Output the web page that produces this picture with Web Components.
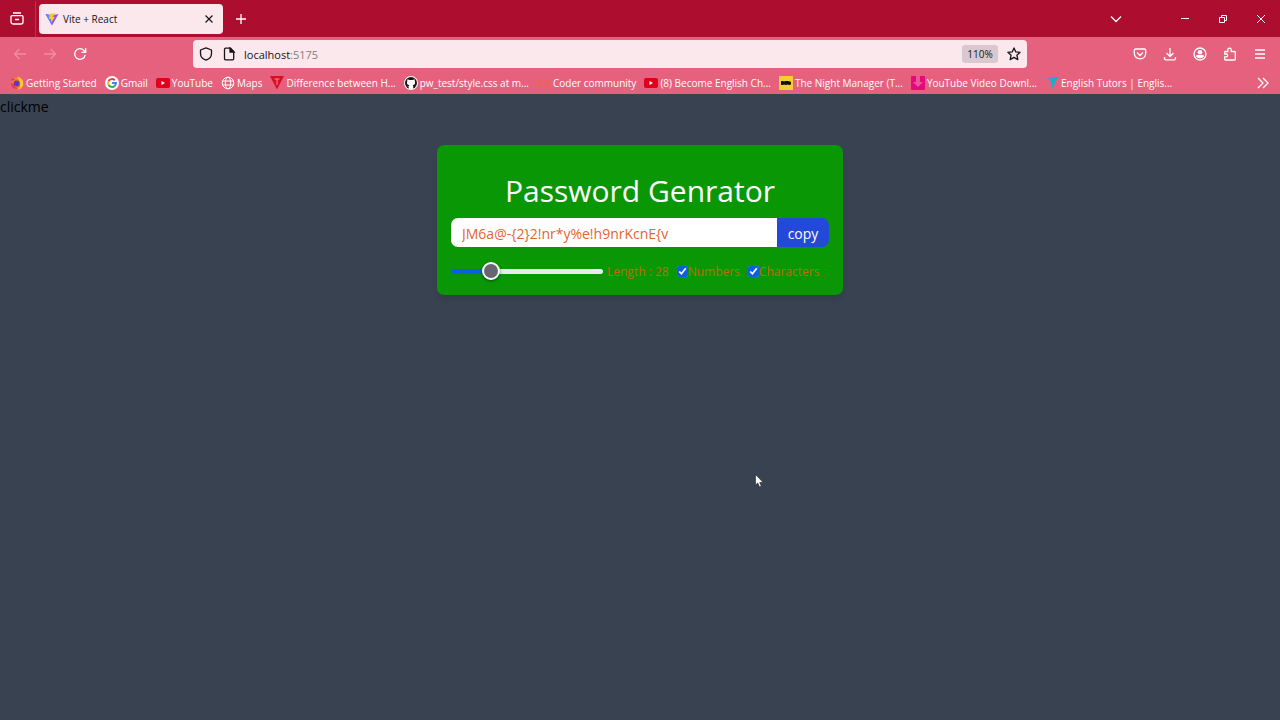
<!DOCTYPE html>
<html lang="en">
<head>
<meta charset="UTF-8">
<meta name="viewport" content="width=device-width, initial-scale=1.0">
<title>Vite + React</title>
<style>
    body {
        margin: 0;
        min-height: 100vh;
        background: #384250;
        font-family: "Open Sans", "Noto Sans", sans-serif;
        color: #000;
    }
</style>
</head>
<body>
<browser-window>
    <tab-strip slot="tabs"></tab-strip>
    <nav-bar slot="nav"></nav-bar>
    <bookmarks-bar slot="bookmarks">
        <bookmark-link>
            <svg slot="icon" viewBox="0 0 14 14"><circle cx="7" cy="7.500" r="6" fill="#ff7a1c"/><path d="M7 1c4 0 6.500 3 6.300 7-.3 3-2.800 5.500-6 5.500 4-2 4-7-.3-12.500z" fill="#ffcb35"/><path d="M1 4.500 2.500 2l1.200 1.600L6 4z" fill="#e8304e"/><circle cx="6.700" cy="7.500" r="3" fill="#6b35b5"/><path d="M1 7c0 5 4 7 8 5-3 0-5-1.500-5.500-4z" fill="#ee3558"/></svg>
            Getting Started
        </bookmark-link>
        <bookmark-link>
            <svg slot="icon" viewBox="0 0 14 14"><circle cx="7" cy="7" r="7" fill="#fff"/><g fill="none" stroke-width="2"><path d="M3.500 5.200A4 4 0 0 1 9.800 4.200" stroke="#ea4335"/><path d="M3.500 5.200a4 4 0 0 0 0 3.600" stroke="#fbbc05"/><path d="M3.500 8.800a4 4 0 0 0 6 1.300" stroke="#34a853"/><path d="M9.500 10.100A4 4 0 0 0 11 7H7" stroke="#4285f4"/></g></svg>
            Gmail
        </bookmark-link>
        <bookmark-link>
            <svg slot="icon" viewBox="0 0 14 14"><rect y="2" width="14" height="10" rx="2" fill="#e0001b"/><path d="M5.500 5v4L9 7z" fill="#fff"/></svg>
            YouTube
        </bookmark-link>
        <bookmark-link>
            <svg slot="icon" viewBox="0 0 14 14" fill="none" stroke="#fff"><circle cx="7" cy="7" r="5.800"/><ellipse cx="7" cy="7" rx="2.700" ry="5.800"/><path d="M1.500 5h11M1.500 9h11"/></svg>
            Maps
        </bookmark-link>
        <bookmark-link>
            <svg slot="icon" viewBox="0 0 14 14"><path d="M0 0h14L7 13.500z" fill="#d80d26"/><path d="M4.500 3h5M7 3v6" stroke="#f8889a" fill="none"/></svg>
            Difference between H...
        </bookmark-link>
        <bookmark-link>
            <svg slot="icon" viewBox="0 0 14 14"><circle cx="7" cy="7" r="7" fill="#fff"/><circle cx="7" cy="7" r="6" fill="#181717"/><path d="M3.500 3.200 5.300 4h3.400l1.800-.8.400 2.300c.6 2-.2 3.500-2.200 3.800.4.500.5 1 .5 1.500V13H4.900v-1.500l-1.700-1.200 1.700.3.500-1.300C3.200 9 2.500 7.500 3.100 5.500z" fill="#fff"/></svg>
            pw_test/style.css at m...
        </bookmark-link>
        <bookmark-link>
            <svg slot="icon" viewBox="0 0 14 14" fill="none" stroke="#e8654f" stroke-width="2"><path d="M5 4H2v6h3M12 4H9v6h3"/></svg>
            Coder community
        </bookmark-link>
        <bookmark-link>
            <svg slot="icon" viewBox="0 0 14 14"><rect y="2" width="14" height="10" rx="2" fill="#e0001b"/><path d="M5.500 5v4L9 7z" fill="#fff"/></svg>
            (8) Become English Ch...
        </bookmark-link>
        <bookmark-link>
            <svg slot="icon" viewBox="0 0 14 14"><path d="M0 0h14v14H0z" fill="#f5cf32"/><path d="M2 5h2l1 .5L6 5h3l2 .5 1 .5v2.500l-2 .5-1-.5-2 .5-2-.5-1 .5H2z" fill="#111"/></svg>
            The Night Manager (T...
        </bookmark-link>
        <bookmark-link>
            <svg slot="icon" viewBox="0 0 14 14"><rect width="14" height="14" rx="1" fill="#e20a7c"/><path d="M5 0h4v6h3l-5 5-5-5h3z" fill="#ef5596"/></svg>
            YouTube Video Downl...
        </bookmark-link>
        <bookmark-link>
            <svg slot="icon" viewBox="0 0 14 14"><path d="M1 1h12L7 13.500 6 6z" fill="#13b1cb"/><path d="M1 1h5v5z" fill="#6c8fb4"/></svg>
            English Tutors | Englis...
        </bookmark-link>
    </bookmarks-bar>
    <password-generator></password-generator>
</browser-window>
<mouse-pointer></mouse-pointer>

<script>
class BrowserWindow extends HTMLElement {

    constructor() {
        super();
        this.shadowDOM = this.attachShadow({mode: "open"});
    }

    connectedCallback() {
        this.shadowDOM.innerHTML = `
        <style>
        :host {
            display: block;
        }

        main {
            font-size: 14px;
            line-height: 26px;
        }
        </style>
        <header>
            <slot name="tabs"></slot>
            <slot name="nav"></slot>
            <slot name="bookmarks"></slot>
        </header>
        <main>
            <div>clickme</div>
            <slot></slot>
        </main>`;
    }
}

customElements.define("browser-window", BrowserWindow);

class TabStrip extends HTMLElement {

    constructor() {
        super();
        this.shadowDOM = this.attachShadow({mode: "open"});
    }

    connectedCallback() {
        this.shadowDOM.innerHTML = `
        <style>
        :host {
            display: flex;
            align-items: center;
            height: 37px;
            background: #ad0d2e;
            color: #fff;
        }

        button {
            display: flex;
            align-items: center;
            justify-content: center;
            width: 36px;
            height: 36px;
            padding: 0;
            border: none;
            background: none;
            color: inherit;
        }

        svg {
            width: 16px;
            height: 16px;
            fill: none;
            stroke: currentColor;
        }

        .view {
            padding-right: 2px;
            border-right: 1px solid #bd3452;
        }

        .tab {
            display: flex;
            align-items: center;
            gap: 4px;
            box-sizing: border-box;
            width: 184px;
            height: 30px;
            margin-left: 3px;
            padding-left: 6px;
            border-radius: 4px;
            background: #fae8ec;
            color: #15141a;
            font-size: 10px;
        }

        .tab span {
            flex: 1;
        }

        .tab button {
            width: 28px;
            height: 28px;
        }

        .tab svg {
            width: 14px;
            height: 14px;
        }

        .list {
            margin-left: auto;
            margin-right: 33px;
        }

        .window {
            display: flex;
            gap: 2px;
            margin-right: 1px;
        }
        </style>
        <button class="view" aria-label="View"><svg viewBox="0 0 16 16"><path d="M4 2h8M3 4.700h10a1 1 0 0 1 1 1V11a2 2 0 0 1-2 2H4a2 2 0 0 1-2-2V5.700a1 1 0 0 1 1-1zM6 8.500h4" stroke-width="1.300"/></svg></button>
        <div class="tab">
            <svg viewBox="0 0 14 14"><path d="M.5 2 7 13.500 13.500 2 7 3.200z" fill="#9250f0" stroke="none"/><path d="M.5 2 7 13.500 5 3z" fill="#548bfa" stroke="none"/><path d="M10 1 4.500 2l-.3 5h1.600l.7 3.500L9.800 5H8z" fill="#ffc920" stroke="none"/></svg>
            <span>Vite + React</span>
            <button aria-label="Close tab"><svg viewBox="0 0 14 14"><path d="m3.500 3.500 7 7m0-7-7 7" stroke-width="1.200"/></svg></button>
        </div>
        <button aria-label="New tab"><svg viewBox="0 0 16 16"><path d="M8 3v10M3 8h10" stroke-width="1.300"/></svg></button>
        <button class="list" aria-label="List all tabs"><svg viewBox="0 0 16 16"><path d="m3 5.500 5 5 5-5" stroke-width="1.300"/></svg></button>
        <div class="window">
            <button aria-label="Minimize"><svg viewBox="0 0 16 16"><path d="M4 7.500h8"/></svg></button>
            <button aria-label="Restore"><svg viewBox="0 0 16 16"><path d="M4.500 6.500h5v5h-5zM6.500 6.500v-2h5v5h-2"/></svg></button>
            <button aria-label="Close"><svg viewBox="0 0 16 16"><path d="m4 4 8 8m0-8-8 8"/></svg></button>
        </div>`;
    }
}

customElements.define("tab-strip", TabStrip);

class NavBar extends HTMLElement {

    constructor() {
        super();
        this.shadowDOM = this.attachShadow({mode: "open"});
    }

    connectedCallback() {
        this.shadowDOM.innerHTML = `
        <style>
        :host {
            display: grid;
            grid-template-columns: 183fr 834fr 243fr;
            align-items: center;
            height: 34px;
            padding: 0 10px;
            background: #e6617d;
            color: #fff;
        }

        .buttons, .tools, .url {
            display: flex;
            align-items: center;
        }

        button {
            display: flex;
            align-items: center;
            justify-content: center;
            width: 30px;
            height: 30px;
            padding: 0;
            border: none;
            background: none;
            color: inherit;
        }

        button:disabled {
            color: #ee8ea3;
        }

        svg {
            width: 14px;
            height: 14px;
            fill: none;
            stroke: currentColor;
            stroke-width: 1.300;
        }

        .buttons button {
            width: 20px;
        }

        .buttons {
            gap: 10px;
        }

        .url {
            height: 28px;
            box-sizing: border-box;
            padding: 0 5px;
            border-radius: 4px;
            background: #fae8ec;
            color: #15141a;
            font-size: 11px;
        }

        .url button {
            width: 16px;
        }

        .url a {
            flex: 1;
            margin-left: 7px;
            color: inherit;
            text-decoration: none;
        }

        .url a span {
            color: #857a82;
        }

        .url .info {
            margin-left: 7px;
        }

        .url .zoom {
            width: 36px;
            height: 18px;
            margin-right: 8px;
            border-radius: 3px;
            background: #d9c9ce;
            font: inherit;
            font-size: 10px;
        }

        .tools {
            justify-content: flex-end;
            margin-right: -5px;
        }
        </style>
        <div class="buttons">
            <button disabled aria-label="Back"><svg viewBox="0 0 14 14"><path d="M13 7H1.500m5-5-5 5 5 5"/></svg></button>
            <button disabled aria-label="Forward"><svg viewBox="0 0 14 14"><path d="M1 7h11.500m-5-5 5 5-5 5"/></svg></button>
            <button aria-label="Reload"><svg viewBox="0 0 14 14"><path d="M12.200 8A5.300 5.300 0 1 1 11 3.500L12.500 5M12.700 1v4.300H8.500" stroke-width="1.300"/></svg></button>
        </div>
        <div class="url">
            <button aria-label="Tracking protection"><svg viewBox="0 0 14 14"><path d="M7 .8 12.500 3v3.500c0 3.200-2.500 5.700-5.500 6.700-3-1-5.500-3.500-5.500-6.700V3z" stroke-linejoin="round"/></svg></button>
            <button class="info" aria-label="Site information"><svg viewBox="0 0 14 14"><path d="M2.500 2.300c0-.7.400-1.100 1.100-1.100h4.800l3.300 3.300v7.200c0 .7-.4 1.100-1.100 1.100h-7c-.7 0-1.100-.4-1.100-1.100z"/><path d="M8 1v4h4z" fill="currentColor"/></svg></button>
            <a href="#">localhost<span>:5175</span></a>
            <button class="zoom">110%</button>
            <button aria-label="Bookmark this page"><svg viewBox="0 0 14 14"><path d="m7 .9 1.800 4 4.300.4-3.200 2.900.9 4.400L7 10.400l-3.800 2.200.9-4.400L.9 5.300l4.300-.4z" stroke-linejoin="round"/></svg></button>
        </div>
        <div class="tools">
            <button aria-label="Pocket"><svg viewBox="0 0 14 14"><path d="M2.500 2h9c.7 0 1.200.5 1.200 1.200v3c0 3.300-2.500 5.600-5.700 5.600S1.300 9.500 1.300 6.200v-3C1.300 2.500 1.800 2 2.500 2zM4 5.500l3 3 3-3"/></svg></button>
            <button aria-label="Downloads"><svg viewBox="0 0 14 14"><path d="M7 1v8.500M3.500 6 7 9.500 10.500 6M1.500 10v1.500c0 .8.500 1.300 1.300 1.300h8.400c.8 0 1.300-.5 1.300-1.300V10"/></svg></button>
            <button aria-label="Account"><svg viewBox="0 0 14 14"><circle cx="7" cy="7" r="6"/><circle cx="7" cy="5.300" r="2.300" fill="currentColor" stroke="none"/><path d="M3 9.300c0-.8.500-1.300 1.300-1.300h5.400c.8 0 1.300.5 1.300 1.300-2 2.700-6 2.700-8 0z" fill="currentColor" stroke="none"/></svg></button>
            <button aria-label="Extensions"><svg viewBox="0 0 14 14"><path d="M2.500 4.500h2.300V2.800a1.700 1.700 0 0 1 3.400 0v1.700h3.300c.5 0 .8.300.8.800v6.900c0 .5-.3.800-.8.800h-9c-.5 0-.8-.3-.8-.8V9.800h1.500a1.400 1.400 0 0 0 0-2.800H1.700V5.300c0-.5.300-.8.800-.8z"/></svg></button>
            <button aria-label="Menu"><svg viewBox="0 0 14 14"><path d="M2 3h10M2 7h10M2 11h10"/></svg></button>
        </div>`;
    }
}

customElements.define("nav-bar", NavBar);

class BookmarksBar extends HTMLElement {

    constructor() {
        super();
        this.shadowDOM = this.attachShadow({mode: "open"});
    }

    connectedCallback() {
        this.shadowDOM.innerHTML = `
        <style>
        :host {
            display: flex;
            align-items: center;
            gap: 8px;
            height: 23px;
            padding: 0 10px;
            background: #e6617d;
            color: #fff;
            font-size: 10px;
        }

        button {
            display: flex;
            margin-left: auto;
            padding: 0;
            border: none;
            background: none;
            color: inherit;
        }

        svg {
            width: 14px;
            height: 14px;
        }
        </style>
        <slot></slot>
        <button aria-label="More bookmarks"><svg viewBox="0 0 14 14" fill="none" stroke="currentColor" stroke-width="1.300"><path d="m2 2 5 5-5 5M7 2l5 5-5 5"/></svg></button>`;
    }
}

customElements.define("bookmarks-bar", BookmarksBar);

class BookmarkLink extends HTMLElement {

    constructor() {
        super();
        this.shadowDOM = this.attachShadow({mode: "open"});
    }

    connectedCallback() {
        this.shadowDOM.innerHTML = `
        <style>
        :host {
            display: block;
        }

        a {
            display: flex;
            align-items: center;
            gap: 2px;
            color: inherit;
            text-decoration: none;
            white-space: nowrap;
        }

        ::slotted(svg) {
            width: 14px;
            height: 14px;
        }
        </style>
        <a href="#"><slot name="icon"></slot><span><slot></slot></span></a>`;
    }
}

customElements.define("bookmark-link", BookmarkLink);

class PasswordGenerator extends HTMLElement {

    constructor() {
        super();
        this.shadowDOM = this.attachShadow({mode: "open"});
    }

    connectedCallback() {
        this.render();
    }

    render() {
        this.shadowDOM.innerHTML = `
        <style>
        :host {
            display: block;
            box-sizing: border-box;
            max-width: 406px;
            margin: 25px auto 0;
            padding: 18px 14px 10px;
            border-radius: 7px;
            background: #0a9705;
            box-shadow: 0 4px 6px -1px rgba(0, 0, 0, 0.1);
            color: #c2670c;
        }

        h1 {
            margin: 0;
            color: #fff;
            font-size: 30px;
            font-weight: 400;
            line-height: 55px;
            text-align: center;
        }

        .field {
            display: flex;
            height: 29px;
            margin-bottom: 10px;
            border-radius: 7px;
            overflow: hidden;
        }

        .field input {
            flex: 1;
            min-width: 0;
            padding: 2px 11px 0;
            border: none;
            background: #fff;
            color: #e2652f;
            font: inherit;
        }

        .field button {
            width: 52px;
            padding: 2px 0 0;
            border: none;
            background: #2448d8;
            color: #fff;
            font: inherit;
        }

        .options {
            display: flex;
            align-items: center;
            font-size: 12px;
        }

        .options input[type="range"] {
            appearance: none;
            width: 152px;
            height: 18px;
            margin: 0 4px 0 0;
            background: none;
        }

        input[type="range"]::-webkit-slider-runnable-track {
            height: 5px;
            border-radius: 3px;
            background: linear-gradient(to right, #0c5fe0 27%, #ebe9ee 27%);
        }

        input[type="range"]::-webkit-slider-thumb {
            appearance: none;
            box-sizing: border-box;
            width: 18px;
            height: 18px;
            margin-top: -7px;
            border: 2px solid #fff;
            border-radius: 50%;
            background: #676573;
            box-shadow: 0 1px 3px rgba(0, 0, 0, 0.5);
        }

        .options input[type="checkbox"] {
            width: 11px;
            height: 11px;
            margin: 0 0 0 8px;
            accent-color: #0c5fe0;
        }

        .options label {
            padding-top: 2px;
        }
        </style>
        <h1>Password Genrator</h1>
        <div class="field">
            <input type="text" aria-label="Password" value="JM6a@-{2}2!nr*y%e!h9nrKcnE{v" readonly>
            <button type="button">copy</button>
        </div>
        <div class="options">
            <input type="range" id="length" min="6" max="100" value="28">
            <label for="length">Length : 28</label>
            <input type="checkbox" id="numbers" checked>
            <label for="numbers">Numbers</label>
            <input type="checkbox" id="characters" checked>
            <label for="characters">Characters</label>
        </div>`;
    }
}

customElements.define("password-generator", PasswordGenerator);

class MousePointer extends HTMLElement {

    constructor() {
        super();
        this.shadowDOM = this.attachShadow({mode: "open"});
    }

    connectedCallback() {
        this.shadowDOM.innerHTML = `
        <style>
        :host {
            position: absolute;
            left: 755px;
            top: 474px;
            pointer-events: none;
        }

        svg {
            display: block;
            width: 9px;
            height: 14px;
        }
        </style>
        <svg viewBox="0 0 9 14"><path d="M.5.5v10.500l2.300-2 1.700 4 1.800-.8-1.600-3.700h3.500z" fill="#fff" stroke="#222" stroke-width=".6"/></svg>`;
    }
}

customElements.define("mouse-pointer", MousePointer);
</script>
</body>
</html>
